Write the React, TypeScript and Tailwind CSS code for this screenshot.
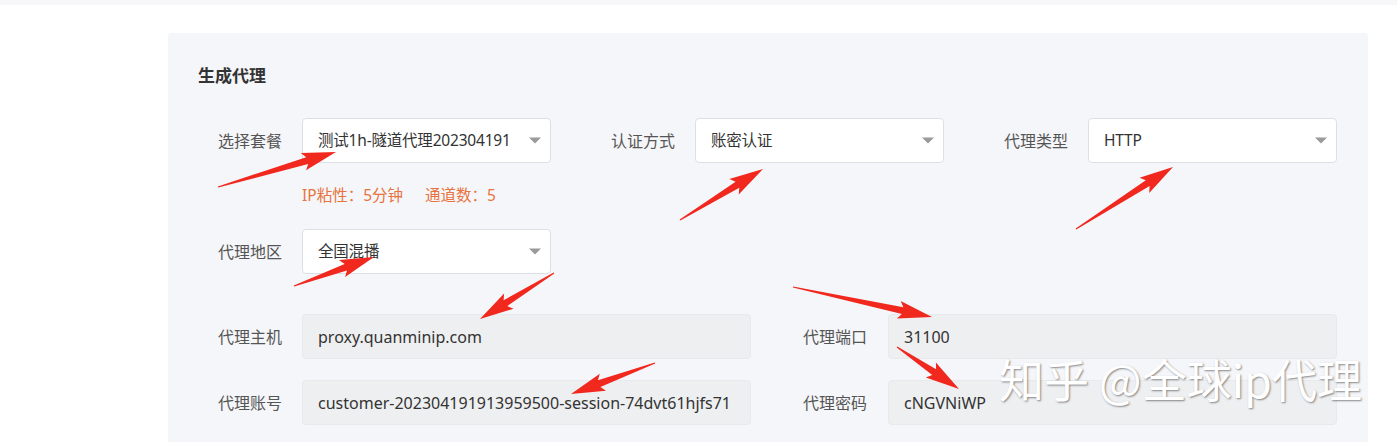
import React from 'react';

// Red annotation arrows: [tailX, tailY, tipX, tipY]
const arrows: [number, number, number, number][] = [
  [218, 187, 336, 152],
  [680, 220, 763, 169],
  [1076, 229, 1173, 167],
  [294, 286, 374, 257],
  [554, 273, 480, 319],
  [793, 287, 932, 317],
  [655, 363, 571, 394],
  [897, 347, 959, 389],
];

const arrowPoints = ([tx, ty, hx, hy]: [number, number, number, number]) => {
  const len = Math.hypot(hx - tx, hy - ty);
  const ux = (hx - tx) / len;
  const uy = (hy - ty) / len;
  const nx = -uy;
  const ny = ux;
  const headLen = 30;
  const bx = hx - ux * headLen;
  const by = hy - uy * headLen;
  const body = 3.5;
  const barb = 9;
  const pts = [
    [tx + nx * 0.6, ty + ny * 0.6],
    [bx + nx * body, by + ny * body],
    [bx - ux * 4 + nx * barb, by - uy * 4 + ny * barb],
    [hx, hy],
    [bx - ux * 4 - nx * barb, by - uy * 4 - ny * barb],
    [bx - nx * body, by - ny * body],
    [tx - nx * 0.6, ty - ny * 0.6],
  ];
  return pts.map((p) => `${p[0].toFixed(1)},${p[1].toFixed(1)}`).join(' ');
};

const Caret = () => (
  <svg width="12" height="7" viewBox="0 0 12 7" className="shrink-0">
    <path d="M0 0.5 L12 0.5 L6 6.5 Z" fill="#9a9a9a" />
  </svg>
);

const Select = ({ value }: { value: string }) => (
  <div className="w-[249px] h-[45px] bg-white border border-[#dcdfe6] rounded-[4px] flex items-center pl-[15px] pr-[9px] gap-[4px]">
    <span className="flex-1 min-w-0 overflow-hidden whitespace-nowrap text-[15.5px] tracking-[-0.2px] text-[#333]">
      {value}
    </span>
    <Caret />
  </div>
);

const ReadOnly = ({ value }: { value: string }) => (
  <div className="w-[449px] h-[45px] bg-[#eeeff1] border border-[#e8e9eb] rounded-[4px] flex items-center pl-[15px] overflow-hidden">
    <span className="whitespace-nowrap text-[16px] text-[#333]">{value}</span>
  </div>
);

const Label = ({ children, className = '' }: { children: React.ReactNode; className?: string }) => (
  <span className={`w-[64px] shrink-0 text-[16px] text-[#555] whitespace-nowrap ${className}`}>{children}</span>
);

export default function App() {
  return (
    <div
      className="relative w-[1397px] h-[442px] overflow-hidden bg-white"
      style={{ fontFamily: '"Noto Sans", "Noto Sans CJK SC", sans-serif' }}
    >
      <div className="h-[5px] bg-[#f7f7f9]" />

      <div className="ml-[168px] mt-[28px] w-[1200px] h-[460px] bg-[#f5f6f9] rounded-[4px] pt-[30px]">
        <h2 className="pl-[30px] text-[17px] leading-[26px] font-bold text-[#333]">生成代理</h2>

        <div className="pl-[50px] mt-[29px] flex items-center gap-[60px]">
          <div className="flex items-center">
            <Label className="mr-[20px]">选择套餐</Label>
            <Select value="测试1h-隧道代理202304191" />
          </div>
          <div className="flex items-center">
            <Label className="mr-[20px]">认证方式</Label>
            <Select value="账密认证" />
          </div>
          <div className="flex items-center">
            <Label className="mr-[20px]">代理类型</Label>
            <Select value="HTTP" />
          </div>
        </div>

        <div className="pl-[134px] mt-[21px] h-[24px] flex items-center gap-[22px] text-[15.5px] text-[#e8733f]">
          <span>IP粘性：5分钟</span>
          <span>通道数：5</span>
        </div>

        <div className="pl-[50px] mt-[21px] flex items-center">
          <Label className="mr-[20px]">代理地区</Label>
          <Select value="全国混播" />
        </div>

        <div className="pl-[50px] mt-[40px] flex flex-col gap-[21px]">
          <div className="flex items-center">
            <Label className="mr-[20px]">代理主机</Label>
            <ReadOnly value="proxy.quanminip.com" />
            <Label className="ml-[52px] mr-[21px]">代理端口</Label>
            <ReadOnly value="31100" />
          </div>
          <div className="flex items-center">
            <Label className="mr-[20px]">代理账号</Label>
            <ReadOnly value="customer-202304191913959500-session-74dvt61hjfs71" />
            <Label className="ml-[52px] mr-[21px]">代理密码</Label>
            <ReadOnly value="cNGVNiWP" />
          </div>
        </div>
      </div>

      {/* annotation arrows */}
      <svg className="absolute inset-0 pointer-events-none" width="1397" height="442">
        {arrows.map((a, i) => (
          <polygon key={i} points={arrowPoints(a)} fill="#f0281e" />
        ))}
      </svg>

      {/* watermark */}
      <div
        className="absolute left-[999px] top-[348px] text-[45px] leading-[62px] text-white whitespace-nowrap pointer-events-none"
        style={{ textShadow: '1px 1px 2px rgba(0,0,0,0.45)', fontFamily: '"Noto Sans CJK SC", sans-serif' }}
      >
        知乎 @全球ip代理
      </div>
    </div>
  );
}
